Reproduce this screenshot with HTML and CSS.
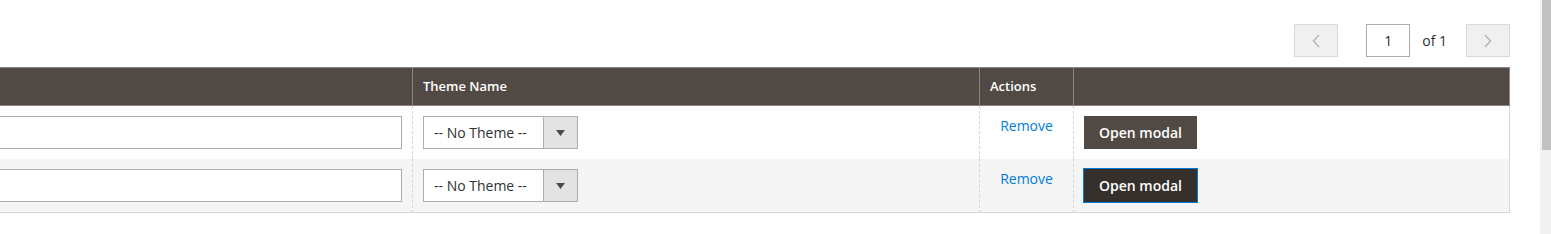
FILE: index.html
```html
<!DOCTYPE html>
<html>
<head>
<meta charset="utf-8">
<link rel="stylesheet" href="styles.css">
</head>
<body>
<div class="page">
  <div class="pager">
    <button class="pg-btn" aria-label="Previous">
      <svg width="8" height="14" viewBox="0 0 8 14"><polyline points="7,1 1.5,7 7,13" fill="none" stroke="#b3b3b3" stroke-width="1.4"/></svg>
    </button>
    <div class="pg-input">1</div>
    <span class="pg-of">of 1</span>
    <button class="pg-btn" aria-label="Next">
      <svg width="8" height="14" viewBox="0 0 8 14"><polyline points="1,1 6.5,7 1,13" fill="none" stroke="#b3b3b3" stroke-width="1.4"/></svg>
    </button>
  </div>

  <div class="grid">
    <div class="th th-first"></div>
    <div class="th">Theme Name</div>
    <div class="th">Actions</div>
    <div class="th th-last"></div>

    <div class="td td-first"><div class="text-input"></div></div>
    <div class="td"><div class="select"><span class="select-text">-- No Theme --</span><span class="select-arrow"><svg width="9" height="6" viewBox="0 0 9 6"><polygon points="0,0 9,0 4.5,6" fill="#514943"/></svg></span></div></div>
    <div class="td td-actions"><span class="link">Remove</span></div>
    <div class="td td-last"><span class="btn">Open modal</span></div>

    <div class="td td-first alt last-row"><div class="text-input"></div></div>
    <div class="td alt last-row"><div class="select"><span class="select-text">-- No Theme --</span><span class="select-arrow"><svg width="9" height="6" viewBox="0 0 9 6"><polygon points="0,0 9,0 4.5,6" fill="#514943"/></svg></span></div></div>
    <div class="td td-actions alt last-row"><span class="link">Remove</span></div>
    <div class="td td-last alt last-row"><span class="btn btn-focus">Open modal</span></div>
  </div>
</div>
<div class="scrollbar"><div class="thumb"></div></div>
</body>
</html>
```
FILE: styles.css
```css
html, body {
  margin: 0;
  padding: 0;
  background: #fff;
  overflow: hidden;
}
body {
  font-family: "Open Sans", "Liberation Sans", sans-serif;
  color: #303030;
  font-size: 14px;
  width: 1551px;
  height: 234px;
  position: relative;
}
.page {
  width: 1510px;
  padding-top: 24px;
}
.pager {
  display: flex;
  justify-content: flex-end;
  align-items: center;
  height: 33px;
}
.pg-btn {
  box-sizing: border-box;
  width: 44px;
  height: 33px;
  background: #f0f0f0;
  border: 1px solid #d9d9d9;
  padding: 0;
  display: flex;
  align-items: center;
  justify-content: center;
  margin: 0;
}
.pg-btn + .pg-input {
  margin-left: 28px;
}
.pg-input {
  box-sizing: border-box;
  width: 44px;
  height: 33px;
  border: 1px solid #adadad;
  display: flex;
  align-items: center;
  justify-content: center;
  font-size: 14px;
  color: #303030;
}
.pg-of {
  margin-left: 12px;
  margin-right: 19px;
  font-size: 14px;
  color: #303030;
}
.grid {
  margin-top: 10px;
  margin-left: -200px;
  display: grid;
  grid-template-columns: 612px 567px 94px 437px;
}
.th {
  box-sizing: border-box;
  height: 39px;
  background: #514943;
  border-top: 1px solid #8a837f;
  border-bottom: 1px solid #8a837f;
  border-left: 1px solid #8a837f;
  color: #fff;
  font-weight: 600;
  font-size: 13px;
  line-height: 37px;
  padding-left: 10px;
}
.th-first {
  border-left: none;
}
.th-last {
  border-right: 1px solid #8a837f;
}
.td {
  box-sizing: border-box;
  height: 53px;
  padding: 10px 10px 10px 10px;
  border-left: 1px dashed #d6d6d6;
  background: #fff;
}
.td-first {
  border-left: none;
}
.td-last {
  border-right: 1px solid #d6d6d6;
}
.alt {
  background: #f5f5f5;
}
.last-row {
  height: 54px;
  border-bottom: 1px solid #d6d6d6;
}
.text-input {
  box-sizing: border-box;
  height: 33px;
  background: #fff;
  border: 1px solid #adadad;
}
.select {
  box-sizing: border-box;
  width: 155px;
  height: 33px;
  border: 1px solid #adadad;
  background: #fff;
  display: flex;
  align-items: stretch;
}
.select-text {
  flex: 1;
  padding-left: 10px;
  line-height: 31px;
  font-size: 14px;
  color: #303030;
}
.select-arrow {
  width: 33px;
  border-left: 1px solid #adadad;
  background: #e3e3e3;
  display: flex;
  align-items: center;
  justify-content: center;
}
.td-actions {
  text-align: center;
  padding-left: 0;
  padding-right: 0;
}
.link {
  display: inline-block;
  line-height: 20px;
  color: #007bdb;
  font-size: 14px;
}
.btn {
  box-sizing: border-box;
  display: inline-flex;
  align-items: center;
  justify-content: center;
  width: 113px;
  height: 33px;
  background: #514943;
  color: #fff;
  font-weight: 600;
  font-size: 14px;
}
.btn-focus {
  background: #35302c;
  box-shadow: 0 0 0 1px #007bdb;
}
.scrollbar {
  position: absolute;
  top: 0;
  right: 0;
  width: 11px;
  height: 234px;
  background: #f1f1f1;
}
.thumb {
  margin-left: 2px;
  width: 9px;
  height: 150px;
  background: #c1c1c1;
}
```
